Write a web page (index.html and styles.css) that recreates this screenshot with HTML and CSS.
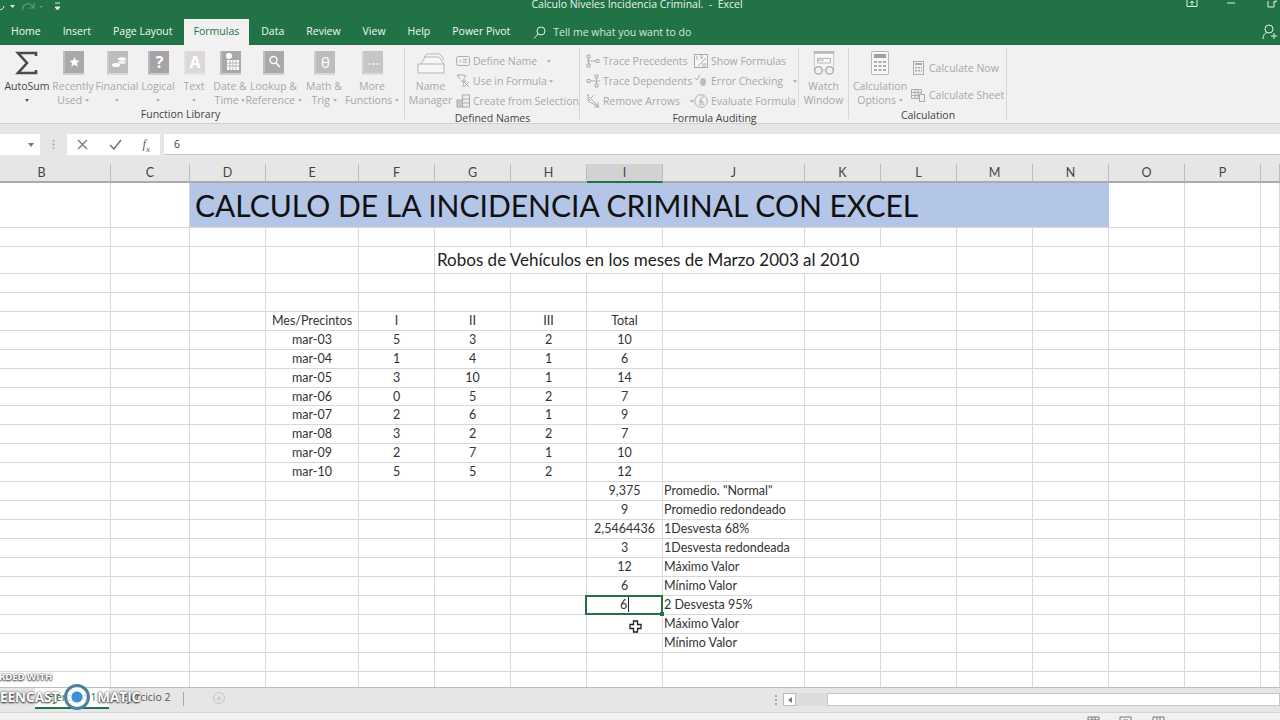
FILE: index.html
```html
<!DOCTYPE html>
<html lang="es">
<head>
    <meta charset="UTF-8">
    <title>Calculo Niveles Incidencia Criminal. - Excel</title>
    <link rel="stylesheet" href="styles.css">
</head>
<body>
    <svg class="defs" width="0" height="0">
        <symbol id="book" viewBox="0 0 21 24">
            <rect x="2" y="0" width="19" height="22"/>
            <rect x="0" y="0" width="2" height="23" opacity="0.7"/>
            <rect x="0" y="22" width="21" height="2" opacity="0.45"/>
        </symbol>
    </svg>

    <header class="titlebar">
        <div class="title-row">
            <div class="quick">
                <svg width="60" height="12" viewBox="0 0 60 12"><path d="M-3 1a4 4 0 1 0 7 3" class="line-white"/><path d="M10 3h5l-2.500 3z" fill="#dfeee6"/><path d="M23 8a5 5 0 0 1 9-4l2 2M34 1v5h-5" class="line-faded"/><path d="M39 4h4l-2 2z" fill="#5f9b7c"/><path d="M55 1h5M55 5h5l-2.500 3-2.500-3z" fill="#dfeee6" stroke="#dfeee6"/></svg>
            </div>
            <div class="doc-title">Calculo Niveles Incidencia Criminal.&nbsp; -&nbsp; Excel</div>
            <div class="win-ctrl">
                <svg width="92" height="8" viewBox="0 0 92 8"><path d="M1 0v6.500h10V0M6 6V1M4 3l2-2 2 2" class="line-white"/><path d="M41 3h8" class="line-white" stroke-width="1.500"/><path d="M82 1v6h6V1M88 2h2V0" class="line-white"/></svg>
            </div>
        </div>
        <div class="tab-row">
            <nav class="tabs">
                <span class="tab">Home</span>
                <span class="tab">Insert</span>
                <span class="tab">Page Layout</span>
                <span class="tab active">Formulas</span>
                <span class="tab">Data</span>
                <span class="tab">Review</span>
                <span class="tab">View</span>
                <span class="tab">Help</span>
                <span class="tab">Power Pivot</span>
            </nav>
            <div class="tell-me">
                <svg width="13" height="13" viewBox="0 0 13 13"><circle cx="8" cy="5" r="4" class="line-white"/><path d="M5 8l-4 4.500" class="line-white"/></svg>
                <span>Tell me what you want to do</span>
            </div>
            <svg class="share" width="15" height="16" viewBox="0 0 15 16"><circle cx="7" cy="5" r="4" class="line-white"/><path d="M1 15c0-4 2-6 4-6.500M9 12h6M12 9v6" class="line-white"/></svg>
        </div>
    </header>

    <section class="ribbon">
        <div class="group group-lib">
            <div class="lib-btns">
                <div class="big on">
                    <svg class="big-ico" width="24" height="24" viewBox="0 0 24 24"><path d="M21 5V2H3l9 10-9 10h18v-3" fill="none" stroke="#4a4a4a" stroke-width="2.600"/></svg>
                    <span>AutoSum</span><span><i class="caret dark"></i></span>
                </div>
                <div class="big">
                    <svg class="big-ico" width="21" height="24"><use href="#book" class="tint-a"/><path d="M11.500 6l1.500 3.400 3.600.3-2.700 2.400.8 3.600-3.200-1.900-3.200 1.900.8-3.600-2.700-2.400 3.600-.3z" fill="#fff"/></svg>
                    <span>Recently</span><span>Used <i class="caret"></i></span>
                </div>
                <div class="big">
                    <svg class="big-ico" width="21" height="24"><use href="#book" class="tint-b"/><ellipse cx="15" cy="8" rx="4" ry="1.700" fill="#fff"/><ellipse cx="15" cy="11.500" rx="4" ry="1.700" fill="#eee"/><ellipse cx="9" cy="14" rx="4" ry="2" fill="#fff"/></svg>
                    <span>Financial</span><span><i class="caret"></i></span>
                </div>
                <div class="big">
                    <svg class="big-ico" width="21" height="24"><use href="#book" class="tint-c"/><text x="11.500" y="17" class="ico-text">?</text></svg>
                    <span>Logical</span><span><i class="caret"></i></span>
                </div>
                <div class="big">
                    <svg class="big-ico" width="21" height="24"><use href="#book" class="tint-d"/><text x="11" y="17" class="ico-text">A</text></svg>
                    <span>Text</span><span><i class="caret"></i></span>
                </div>
                <div class="big">
                    <svg class="big-ico" width="21" height="24"><use href="#book" class="tint-a"/><rect x="7" y="9" width="12" height="10" fill="#fff"/><path d="M7 12h12M7 15h12M10 9v10M13 9v10M16 9v10" stroke="#aaa" stroke-width="0.800"/><circle cx="9" cy="5" r="3" fill="#fff"/></svg>
                    <span>Date &amp;</span><span>Time <i class="caret"></i></span>
                </div>
                <div class="big">
                    <svg class="big-ico" width="21" height="24"><use href="#book" class="tint-a"/><circle cx="10.500" cy="9" r="3.500" fill="none" stroke="#fff" stroke-width="1.400"/><path d="M13 12l4 4" stroke="#fff" stroke-width="1.600"/></svg>
                    <span>Lookup &amp;</span><span>Reference <i class="caret"></i></span>
                </div>
                <div class="big">
                    <svg class="big-ico" width="21" height="24"><use href="#book" class="tint-b"/><text x="11.500" y="16.500" class="ico-text thin">θ</text></svg>
                    <span>Math &amp;</span><span>Trig <i class="caret"></i></span>
                </div>
                <div class="big">
                    <svg class="big-ico" width="21" height="24"><use href="#book" class="tint-e"/><path d="M6.500 13h2M10.500 13h2M14.500 13h2" stroke="#fff" stroke-width="1.600"/></svg>
                    <span>More</span><span>Functions <i class="caret"></i></span>
                </div>
            </div>
            <div class="group-label lib-label">Function Library</div>
        </div>

        <div class="group group-names">
            <div class="group-body">
                <div class="big name-mgr">
                    <svg class="big-ico" width="28" height="24" viewBox="0 0 28 24"><path d="M1 22V13h26v9zM4 13l4-7h14l5 7M7 6l3-3h13l4 6" fill="#f6f6f6" stroke="#b5b5b5"/></svg>
                    <span>Name</span><span>Manager</span>
                </div>
                <div class="stack">
                    <div class="small"><svg class="sm-ico" width="14" height="14" viewBox="0 0 14 14"><rect x="0.500" y="2.500" width="13" height="9" rx="2" class="ln"/><path d="M3 7h2M7 5.500h4M7 8h4" class="ln"/></svg>Define Name <i class="caret wide"></i></div>
                    <div class="small"><svg class="sm-ico" width="14" height="14" viewBox="0 0 14 14"><path d="M1 1h8M1 1l3 4M6 13c2 0 1-4 2-8s1-3 3-3M5 7h5M8 8l5 5M13 8l-5 5" class="ln"/></svg>Use in Formula <i class="caret"></i></div>
                    <div class="small"><svg class="sm-ico" width="14" height="14" viewBox="0 0 14 14"><rect x="1" y="6" width="7" height="7" fill="#c9c9c9" stroke="#aaa"/><rect x="6.500" y="1" width="7" height="12" fill="#eee" stroke="#aaa"/><path d="M6.500 5h7M6.500 9h7" class="ln"/></svg>Create from Selection</div>
                </div>
            </div>
            <div class="group-label">Defined Names</div>
        </div>

        <div class="group group-audit">
            <div class="group-body">
                <div class="stack audit-a">
                    <div class="small"><svg class="sm-ico" width="14" height="14" viewBox="0 0 14 14"><path d="M1 1h3v3H1zM1 10h3v3H1zM10 5.500h3v3h-3zM2.500 4v6M1 7h4M5 7h5" class="ln"/></svg>Trace Precedents</div>
                    <div class="small"><svg class="sm-ico" width="14" height="14" viewBox="0 0 14 14"><path d="M1 5.500h3v3H1zM9 1h3v3H9zM9 10h3v3H9zM10.500 4v6M9 7h5M4 7h5" class="ln"/></svg>Trace Dependents</div>
                    <div class="small"><svg class="sm-ico" width="14" height="14" viewBox="0 0 14 14"><path d="M2 1v5M1 1h2M8 1L2 7M2 7l11 6M8 13l5 0M3 3l9 9M12 8v5" class="ln"/></svg>Remove Arrows <i class="caret wide"></i></div>
                </div>
                <div class="stack">
                    <div class="small"><svg class="sm-ico" width="14" height="14" viewBox="0 0 14 14"><rect x="0.500" y="0.500" width="13" height="13" fill="#f6f6f6" stroke="#aaa"/><path d="M3 2v4M6 2h3M6 4h3M4 12l8-8M8 10h4M8 12h4" class="ln"/></svg>Show Formulas</div>
                    <div class="small"><svg class="sm-ico" width="14" height="14" viewBox="0 0 14 14"><path d="M1 4l2 2 3-5" class="ln"/><path d="M6 8a3 4 0 1 1 6 0 3 4 0 1 1-6 0z" fill="#bcbcbc"/></svg>Error Checking <i class="caret wide"></i></div>
                    <div class="small"><svg class="sm-ico" width="14" height="14" viewBox="0 0 14 14"><circle cx="7" cy="7" r="6.300" class="ln"/><path d="M5 11c2 0 1-4 2-6s1-2 3-2M5 7h4M7 8l3 3M10 8l-3 3" class="ln"/></svg>Evaluate Formula</div>
                </div>
                <div class="big watch">
                    <svg class="big-ico" width="26" height="26" viewBox="0 0 26 26"><rect x="2.500" y="0.500" width="21" height="20" fill="#f8f8f8" stroke="#c2c2c2"/><rect x="2" y="0" width="22" height="3" fill="#b9b9b9"/><path d="M6 8h14v5H6zM6 10h7" class="ln"/><circle cx="7" cy="21" r="4" fill="#f1f1f1" stroke="#a8a8a8" stroke-width="1.400"/><circle cx="19" cy="21" r="4" fill="#f1f1f1" stroke="#a8a8a8" stroke-width="1.400"/></svg>
                    <span>Watch</span><span>Window</span>
                </div>
            </div>
            <div class="group-label">Formula Auditing</div>
        </div>

        <div class="group group-calc">
            <div class="group-body">
                <div class="big calc-opt">
                    <svg class="big-ico" width="18" height="24" viewBox="0 0 18 24"><rect x="0.500" y="0.500" width="17" height="23" rx="1" fill="#f6f6f6" stroke="#b8b8b8"/><rect x="3" y="3" width="12" height="4" fill="#9f9f9f"/><path d="M3 10h3v2H3zM7.500 10h3v2h-3zM12 10h3v2h-3zM3 14h3v2H3zM7.500 14h3v2h-3zM12 14h3v2h-3zM3 18h3v2H3zM7.500 18h3v2h-3zM12 18h3v2h-3z" fill="#adadad"/></svg>
                    <span>Calculation</span><span>Options <i class="caret"></i></span>
                </div>
                <div class="stack calc-stack">
                    <div class="small"><svg class="sm-ico" width="14" height="14" viewBox="0 0 14 14"><rect x="2.500" y="0.500" width="10" height="13" class="ln"/><path d="M4 2h7v2H4zM4 6h2v1.500H4zM7 6h2v1.500H7zM10 6h1v1.500h-1zM4 9h2v1.500H4zM7 9h2v1.500H7zM10 9h1v1.500h-1z" fill="#aaa"/></svg>Calculate Now</div>
                    <div class="small"><svg class="sm-ico" width="14" height="14" viewBox="0 0 14 14"><path d="M0.500 1.500h10v9h-10zM0.500 4.500h10M0.500 7.500h10M4 1.500v9M7 1.500v9" class="ln"/><rect x="8.500" y="6.500" width="5" height="7" fill="#f1f1f1" stroke="#aaa"/></svg>Calculate Sheet</div>
                </div>
            </div>
            <div class="group-label">Calculation</div>
        </div>
    </section>

    <section class="formula-bar">
        <div class="name-box"><i class="caret dark"></i></div>
        <div class="grip"></div>
        <div class="fx-box">
            <svg width="11" height="11" viewBox="0 0 11 11"><path d="M1 1l9 9M10 1l-9 9" fill="none" stroke="#777" stroke-width="1.300"/></svg>
            <svg width="13" height="11" viewBox="0 0 13 11"><path d="M1 6l4 4 7-9" fill="none" stroke="#777" stroke-width="1.600"/></svg>
            <span class="fx">f<sub>x</sub></span>
        </div>
        <div class="formula-input">6</div>
    </section>

    <main class="sheet">
        <table class="grid">
            <colgroup>
                <col class="col-b"><col class="col-c"><col><col class="col-e"><col><col><col><col><col class="col-j"><col><col><col><col><col><col><col class="col-q">
            </colgroup>
            <thead>
                <tr>
                    <th class="head-b">B</th><th>C</th><th>D</th><th>E</th><th>F</th><th>G</th><th>H</th><th class="head-on">I</th><th>J</th><th>K</th><th>L</th><th>M</th><th>N</th><th>O</th><th>P</th><th></th>
                </tr>
            </thead>
            <tbody>
                <tr class="row-title"><td></td><td></td><td colspan="11" class="banner">CALCULO DE LA INCIDENCIA CRIMINAL CON EXCEL</td><td></td><td></td><td></td></tr>
                <tr><td></td><td></td><td></td><td></td><td></td><td></td><td></td><td></td><td></td><td></td><td></td><td></td><td></td><td></td><td></td><td></td></tr>
                <tr class="row-sub"><td></td><td></td><td></td><td></td><td></td><td colspan="6" class="subtitle">Robos de Vehículos en los meses de Marzo 2003 al 2010</td><td></td><td></td><td></td><td></td><td></td></tr>
                <tr><td></td><td></td><td></td><td></td><td></td><td></td><td></td><td></td><td></td><td></td><td></td><td></td><td></td><td></td><td></td><td></td></tr>
                <tr><td></td><td></td><td></td><td></td><td></td><td></td><td></td><td></td><td></td><td></td><td></td><td></td><td></td><td></td><td></td><td></td></tr>
                <tr><td></td><td></td><td></td><td>Mes/Precintos</td><td>I</td><td>II</td><td>III</td><td>Total</td><td></td><td></td><td></td><td></td><td></td><td></td><td></td><td></td></tr>
                <tr><td></td><td></td><td></td><td>mar-03</td><td>5</td><td>3</td><td>2</td><td>10</td><td></td><td></td><td></td><td></td><td></td><td></td><td></td><td></td></tr>
                <tr><td></td><td></td><td></td><td>mar-04</td><td>1</td><td>4</td><td>1</td><td>6</td><td></td><td></td><td></td><td></td><td></td><td></td><td></td><td></td></tr>
                <tr><td></td><td></td><td></td><td>mar-05</td><td>3</td><td>10</td><td>1</td><td>14</td><td></td><td></td><td></td><td></td><td></td><td></td><td></td><td></td></tr>
                <tr class="row-short"><td></td><td></td><td></td><td>mar-06</td><td>0</td><td>5</td><td>2</td><td>7</td><td></td><td></td><td></td><td></td><td></td><td></td><td></td><td></td></tr>
                <tr><td></td><td></td><td></td><td>mar-07</td><td>2</td><td>6</td><td>1</td><td>9</td><td></td><td></td><td></td><td></td><td></td><td></td><td></td><td></td></tr>
                <tr><td></td><td></td><td></td><td>mar-08</td><td>3</td><td>2</td><td>2</td><td>7</td><td></td><td></td><td></td><td></td><td></td><td></td><td></td><td></td></tr>
                <tr><td></td><td></td><td></td><td>mar-09</td><td>2</td><td>7</td><td>1</td><td>10</td><td></td><td></td><td></td><td></td><td></td><td></td><td></td><td></td></tr>
                <tr><td></td><td></td><td></td><td>mar-10</td><td>5</td><td>5</td><td>2</td><td>12</td><td></td><td></td><td></td><td></td><td></td><td></td><td></td><td></td></tr>
                <tr><td></td><td></td><td></td><td></td><td></td><td></td><td></td><td>9,375</td><td class="note">Promedio. "Normal"</td><td></td><td></td><td></td><td></td><td></td><td></td><td></td></tr>
                <tr><td></td><td></td><td></td><td></td><td></td><td></td><td></td><td>9</td><td class="note">Promedio redondeado</td><td></td><td></td><td></td><td></td><td></td><td></td><td></td></tr>
                <tr><td></td><td></td><td></td><td></td><td></td><td></td><td></td><td>2,5464436</td><td class="note">1Desvesta 68%</td><td></td><td></td><td></td><td></td><td></td><td></td><td></td></tr>
                <tr><td></td><td></td><td></td><td></td><td></td><td></td><td></td><td>3</td><td class="note">1Desvesta redondeada</td><td></td><td></td><td></td><td></td><td></td><td></td><td></td></tr>
                <tr><td></td><td></td><td></td><td></td><td></td><td></td><td></td><td>12</td><td class="note">Máximo Valor</td><td></td><td></td><td></td><td></td><td></td><td></td><td></td></tr>
                <tr><td></td><td></td><td></td><td></td><td></td><td></td><td></td><td>6</td><td class="note">Mínimo Valor</td><td></td><td></td><td></td><td></td><td></td><td></td><td></td></tr>
                <tr><td></td><td></td><td></td><td></td><td></td><td></td><td></td><td class="sel"><span class="editing">6</span></td><td class="note">2 Desvesta 95%</td><td></td><td></td><td></td><td></td><td></td><td></td><td></td></tr>
                <tr><td></td><td></td><td></td><td></td><td></td><td></td><td></td><td></td><td class="note">Máximo Valor</td><td></td><td></td><td></td><td></td><td></td><td></td><td></td></tr>
                <tr><td></td><td></td><td></td><td></td><td></td><td></td><td></td><td></td><td class="note">Mínimo Valor</td><td></td><td></td><td></td><td></td><td></td><td></td><td></td></tr>
                <tr><td></td><td></td><td></td><td></td><td></td><td></td><td></td><td></td><td></td><td></td><td></td><td></td><td></td><td></td><td></td><td></td></tr>
                <tr><td></td><td></td><td></td><td></td><td></td><td></td><td></td><td></td><td></td><td></td><td></td><td></td><td></td><td></td><td></td><td></td></tr>
                <tr><td></td><td></td><td></td><td></td><td></td><td></td><td></td><td></td><td></td><td></td><td></td><td></td><td></td><td></td><td></td><td></td></tr>
            </tbody>
        </table>
        <svg class="cell-cursor" width="13" height="13" viewBox="0 0 13 13"><path d="M4.500 1h4v3.500H12v4H8.500V12h-4V8.500H1v-4h3.500z" fill="#fff" stroke="#222" stroke-width="1.300"/></svg>
    </main>

    <footer class="sheet-bar">
        <div class="sheet-tabs">
            <span class="sheet-tab active">Ejercicio 1</span>
            <span class="sheet-tab">Ejercicio 2</span>
            <span class="tab-sep"></span>
            <span class="add-sheet">+</span>
        </div>
        <div class="h-scroll">
            <div class="grip"></div>
            <div class="scroll-btn"><i class="arrow-left"></i></div>
            <div class="scroll-track"></div>
            <div class="scroll-thumb"></div>
        </div>
    </footer>
    <div class="status-bar">
        <svg width="80" height="10" viewBox="0 0 80 10"><path d="M1 10V1h11v9M1 4h11M1 7h11M5 1v9M8 1v9M33 10V1h11v9M36 4h5v6h-5zM66 10V1h11v9M70 1v9M73 1v9" fill="none" stroke="#777"/></svg>
    </div>

    <div class="watermark">
        <div class="wm-top">RDED WITH</div>
        <div class="wm-main">
            <span>EENCAST</span>
            <i class="wm-dot"></i>
            <span>MATIC</span>
        </div>
    </div>
</body>
</html>
```

FILE: styles.css
```css
* {
    box-sizing: border-box;
}

body {
    margin: 0;
    width: 1280px;
    height: 720px;
    overflow: hidden;
    position: relative;
    background: #e6e6e6;
    font-family: "Open Sans", "Noto Sans", sans-serif;
    font-size: 10.5px;
    color: #444;
}

.defs {
    position: absolute;
}

.line-white {
    fill: none;
    stroke: #e4f0ea;
    stroke-width: 1;
}

.line-faded {
    fill: none;
    stroke: #5f9b7c;
    stroke-width: 1.2;
}

/* title bar + tabs */
.titlebar {
    height: 45px;
    background: #217346;
    color: #fff;
}

.title-row {
    height: 19px;
    display: grid;
    grid-template-columns: 1fr auto 1fr;
    align-items: start;
}

.quick svg,
.win-ctrl svg {
    display: block;
}

.quick {
    padding-top: 2px;
}

.doc-title {
    margin-right: 6px;
    margin-top: -3px;
    line-height: 14px;
    color: #e9f2ed;
}

.win-ctrl {
    justify-self: end;
    padding-right: 2px;
}

.tab-row {
    height: 26px;
    display: flex;
    align-items: center;
}

.tabs {
    display: flex;
    height: 26px;
    align-items: stretch;
}

.tab {
    padding: 0 11px;
    line-height: 25px;
    color: #f2f7f4;
}

.tab.active {
    background: #f1f1f1;
    color: #217346;
    padding: 0 10px;
    margin: 0 1px 0 0;
}

.tell-me {
    margin-left: 12px;
    display: flex;
    align-items: center;
    gap: 7px;
    color: #d5e7dd;
}

.share {
    margin-left: auto;
    margin-right: 3px;
}

/* ribbon */
.ribbon {
    height: 79px;
    background: #f1f1f1;
    display: flex;
    border-bottom: 1px solid #d0d0d0;
    color: #a8a8a8;
}

.group {
    position: relative;
    display: flex;
    flex-direction: column;
    padding-top: 6px;
}

.group::after {
    content: "";
    position: absolute;
    right: 0;
    top: 3px;
    bottom: 4px;
    width: 1px;
    background: #d6d6d6;
}

.group-body {
    flex: 1;
    display: flex;
}

.group-label {
    height: 17px;
    line-height: 14px;
    text-align: center;
    color: #444;
}

.group-lib {
    width: 405px;
    padding-left: 5px;
}

.group-names {
    width: 175px;
}

.group-audit {
    width: 269px;
}

.group-calc {
    width: 158px;
}

.lib-btns {
    flex: 1;
    display: grid;
    grid-template-columns: 44px 48px 40px 42px 30px 42px 45px 56px 40px;
}

.lib-label {
    padding-right: 49px;
}

.big {
    display: flex;
    flex-direction: column;
    align-items: center;
    line-height: 13.5px;
    white-space: nowrap;
}

.big span {
    height: 13.5px;
}

.big.on {
    color: #444;
}

.big-ico {
    display: block;
    height: 24px;
    margin-bottom: 5px;
    flex: none;
}

.name-mgr {
    width: 51px;
    margin-right: 0;
}

.stack {
    display: flex;
    flex-direction: column;
    white-space: nowrap;
}

.small {
    height: 20px;
    display: flex;
    align-items: center;
    gap: 2px;
}

.sm-ico {
    flex: none;
    fill: none;
    margin-right: 1px;
}

.ln {
    fill: none;
    stroke: #adadad;
    stroke-width: 1;
}

.audit-a {
    width: 108px;
    margin-left: 6px;
}

.audit-a + .stack {
    width: 104px;
}

.watch {
    width: 51px;
    position: relative;
}

.watch::before {
    content: "";
    position: absolute;
    left: 0;
    top: -3px;
    bottom: 3px;
    width: 1px;
    background: #dcdcdc;
}

.calc-opt {
    width: 62px;
}

.calc-stack {
    padding-top: 3px;
}

.calc-stack .small {
    height: 27px;
    gap: 3px;
}

.caret {
    display: inline-block;
    width: 0;
    height: 0;
    border: 2.5px solid transparent;
    border-top: 3px solid #b4b4b4;
    border-bottom: 0;
    vertical-align: middle;
}

.caret.dark {
    border-top-color: #555;
}

.caret.wide {
    margin-left: 8px;
}

.tint-a { fill: #a9a9a9; }
.tint-b { fill: #bdbdbd; }
.tint-c { fill: #a7a1a8; }
.tint-d { fill: #dcd8da; }
.tint-e { fill: #c6c6c6; }

.ico-text {
    fill: #fff;
    font-size: 16px;
    font-weight: 700;
    text-anchor: middle;
}

.ico-text.thin {
    font-weight: 400;
    font-size: 15px;
}

/* formula bar */
.formula-bar {
    height: 40px;
    padding: 10px 0 9px;
    display: flex;
    align-items: stretch;
    background: #e6e6e6;
}

.name-box {
    width: 40px;
    background: #fff;
    display: flex;
    align-items: center;
    justify-content: flex-end;
    padding-right: 6px;
}

.name-box .caret {
    border-width: 3px;
    border-top-width: 4px;
    border-top-color: #777;
}

.grip {
    width: 27px;
    background-image: radial-gradient(circle, #aaa 1px, transparent 1.2px);
    background-size: 27px 4px;
    background-position: center;
    background-repeat: repeat-y;
    margin: 6px 0;
}

.fx-box {
    width: 93px;
    background: #fff;
    margin-right: 4px;
    display: flex;
    align-items: center;
    justify-content: space-between;
    padding: 0 10px 0 10px;
}

.fx {
    font-family: "Liberation Serif", serif;
    font-style: italic;
    font-size: 13px;
    color: #666;
}

.fx sub {
    font-size: 9px;
}

.formula-input {
    flex: 1;
    background: #fff;
    line-height: 21px;
    padding-left: 10px;
    color: #444;
    border-bottom: 1px solid #c8c8c8;
}

/* sheet */
.sheet {
    position: relative;
    height: 523px;
    overflow: hidden;
    background: #fff;
    font-family: Lato, "Open Sans", sans-serif;
    font-size: 12.5px;
    color: #333;
}

.grid {
    width: 1280px;
    table-layout: fixed;
    border-collapse: separate;
    border-spacing: 0;
}

.grid col {
    width: 76px;
}

.grid col.col-b { width: 111px; }
.grid col.col-c { width: 79px; }
.grid col.col-e { width: 93px; }
.grid col.col-j { width: 142px; }
.grid col.col-q { width: 19px; }

.grid th {
    height: 19px;
    padding: 0;
    background: #e6e6e6;
    border-right: 1px solid #bdbdbd;
    border-bottom: 2px solid #ababab;
    font-weight: 400;
    line-height: 16px;
    color: #444;
}

.grid th.head-b {
    padding-right: 27px;
}

.grid th.head-on {
    background: #d2d2d2;
    border-bottom-color: #217346;
}

.grid td {
    height: 19px;
    padding: 0;
    border-right: 1px solid #d8d8d8;
    border-bottom: 1px solid #d8d8d8;
    text-align: center;
    line-height: 16px;
    white-space: nowrap;
}

.grid .row-title td {
    height: 45px;
}

.grid .row-sub td {
    height: 27px;
}

.grid .row-short td {
    height: 18px;
}

.grid td.banner {
    background: #b4c6e7;
    border-right-color: #b4c6e7;
    text-align: left;
    padding-left: 5px;
    font-size: 30px;
    line-height: 44px;
    color: #111;
}

.grid td.subtitle {
    text-align: left;
    padding-left: 2px;
    font-size: 17px;
    line-height: 26px;
    color: #222;
}

.grid td.note {
    text-align: left;
    padding-left: 1px;
}

.grid td.sel {
    position: relative;
}

.grid td.sel::before {
    content: "";
    position: absolute;
    top: -1px;
    left: -2px;
    right: -1px;
    bottom: -1px;
    border: 2px solid #217346;
}

.grid td.sel::after {
    content: "";
    position: absolute;
    right: -2px;
    bottom: -2px;
    width: 4px;
    height: 4px;
    background: #217346;
}

.editing {
    border-right: 1px solid #222;
    padding-right: 1px;
}

.cell-cursor {
    position: absolute;
    left: 629px;
    top: 456px;
}

/* bottom bars */
.sheet-bar {
    height: 25px;
    display: flex;
    background: #e6e6e6;
    border-top: 1px solid #bdbdbd;
}

.sheet-tabs {
    width: 776px;
    display: flex;
    align-items: stretch;
    padding-left: 35px;
    height: 21px;
}

.sheet-tab {
    width: 74px;
    text-align: center;
    line-height: 19px;
    color: #555;
}

.sheet-tab.active {
    background: #fff;
    border-bottom: 2px solid #217346;
    color: #217346;
}

.tab-sep {
    width: 1px;
    margin: 4px 0 3px;
    background: #aaa;
}

.add-sheet {
    width: 12px;
    height: 12px;
    margin: 4px 0 0 29px;
    border: 1px solid #c4c4c4;
    border-radius: 50%;
    font-size: 11px;
    line-height: 9px;
    text-align: center;
    color: #b4b4b4;
}

.h-scroll {
    flex: 1;
    display: flex;
    align-items: flex-start;
    padding-top: 5px;
}

.h-scroll .grip {
    width: 14px;
    height: 12px;
    margin: 1px 0 0 -7px;
    background-size: 14px 4px;
}

.scroll-btn {
    width: 13px;
    height: 13px;
    background: #fff;
    border: 1px solid #bbb;
    display: flex;
    align-items: center;
    justify-content: center;
}

.arrow-left {
    width: 0;
    height: 0;
    border: 3px solid transparent;
    border-right: 4px solid #777;
    border-left: 0;
}

.scroll-track {
    width: 31px;
    height: 13px;
    background: #dcdcdc;
}

.scroll-thumb {
    flex: 1;
    height: 13px;
    background: #fff;
    border: 1px solid #c8c8c8;
}

.status-bar {
    height: 8px;
    background: #f1f1f1;
    border-top: 1px solid #d6d6d6;
    padding: 3px 0 0 1087px;
    overflow: hidden;
}

.status-bar svg {
    display: block;
}

/* recorder watermark */
.watermark {
    position: absolute;
    left: 0;
    top: 670px;
    font-family: "Open Sans", sans-serif;
    font-weight: 700;
    color: #fff;
    text-shadow: 0 0 2px #333, 0 1px 2px #333;
}

.wm-top {
    font-size: 9.5px;
    line-height: 13px;
    margin-left: -1px;
}

.wm-main {
    display: flex;
    align-items: center;
    font-size: 13.5px;
    line-height: 22px;
    margin-top: 1px;
    white-space: nowrap;
}

.wm-dot {
    flex: none;
    width: 26px;
    height: 26px;
    margin: 0 7px 0 5px;
    border-radius: 50%;
    border: 3px solid #4f7f9e;
    background: radial-gradient(circle, #3d8fd6 0 5px, rgba(255, 255, 255, 0.75) 6px);
}
```
